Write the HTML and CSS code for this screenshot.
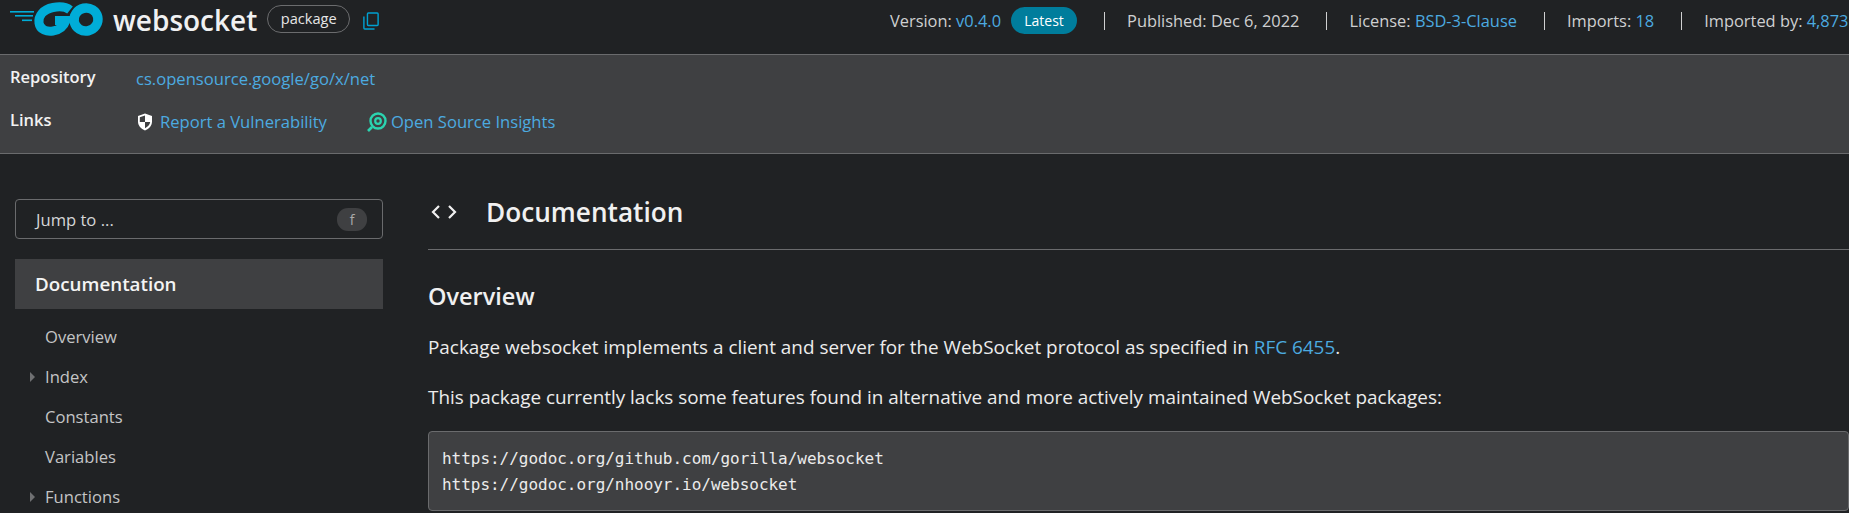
FILE: index.html
```html
<!DOCTYPE html>
<html lang="en">
<head>
<meta charset="utf-8">
<title>websocket package</title>
<link rel="stylesheet" href="styles.css">
</head>
<body>
<header class="head">
  <div class="title">
    <svg class="logo" viewBox="0 0 94 38" width="94" height="38" aria-hidden="true">
      <g fill="#00add8">
        <rect x="0" y="11" width="24" height="1.600"/>
        <rect x="5" y="15" width="18" height="1.600"/>
        <rect x="12" y="19.500" width="10" height="1.600"/>
      </g>
      <g fill="none" stroke="#00add8">
        <path d="M60 10C55 6 48 6.500 43 7.500C33 9.500 28 16 29 23C30 30 37 32 43 31C50 30 54 26 56 20.500H45" stroke-width="9"/>
        <ellipse cx="76" cy="19.500" rx="12" ry="11.500" stroke-width="9.500" transform="rotate(-12 76 19.500)"/>
      </g>
    </svg>
    <h1 class="name">websocket</h1>
    <span class="badge">package</span>
    <svg class="copy" viewBox="0 0 18 20" width="16" height="18" aria-hidden="true">
      <g fill="none" stroke="#00a0d0" stroke-width="1.600">
        <rect x="5" y="1" width="12" height="14" rx="1"/>
        <path d="M1 5v13a1 1 0 0 0 1 1h11"/>
      </g>
    </svg>
  </div>
  <div class="facts">
    <span class="fact">Version: <a href="#">v0.4.0</a><span class="pill">Latest</span></span>
    <span class="fact sep">Published: Dec 6, 2022</span>
    <span class="fact sep">License: <a href="#">BSD-3-Clause</a></span>
    <span class="fact sep">Imports: <a href="#">18</a></span>
    <span class="fact sep">Imported by: <a href="#">4,873</a></span>
  </div>
</header>

<section class="meta">
  <div class="meta-row">
    <strong class="meta-label">Repository</strong>
    <a class="meta-link" href="#">cs.opensource.google/go/x/net</a>
  </div>
  <div class="meta-row">
    <strong class="meta-label">Links</strong>
    <div class="meta-links">
      <a class="meta-link icon-link" href="#">
        <svg class="shield" viewBox="0 0 16 18" width="16" height="18" aria-hidden="true">
          <path d="M8 .5L15 3v5.500c0 4.200-3 7.500-7 9c-4-1.500-7-4.800-7-9V3z" fill="#fff"/>
          <path d="M8 2.500v6.500H2.800V4.300zM8 9h5.200c-.4 2.800-2.600 5-5.200 6.200z" fill="#3f4042"/>
        </svg>Report a Vulnerability</a>
      <a class="meta-link icon-link" href="#">
        <svg class="insights" viewBox="0 0 20 20" width="20" height="20" aria-hidden="true">
          <g fill="none" stroke="#2bd4b0">
            <circle cx="11" cy="9" r="7.500" stroke-width="2.400"/>
            <circle cx="11" cy="9" r="2.800" stroke-width="2.200"/>
            <path d="M5 15l-4 4" stroke-width="2.600"/>
          </g>
        </svg>Open Source Insights</a>
    </div>
  </div>
</section>

<div class="page">
  <nav class="side">
    <div class="jump">
      <span>Jump to ...</span>
      <kbd class="key">f</kbd>
    </div>
    <div class="side-head">Documentation</div>
    <ul class="side-list">
      <li class="side-item">Overview</li>
      <li class="side-item more">Index</li>
      <li class="side-item">Constants</li>
      <li class="side-item">Variables</li>
      <li class="side-item more">Functions</li>
    </ul>
  </nav>
  <main class="doc">
    <div class="doc-head">
      <svg class="code-icon" viewBox="0 0 26 16" width="26" height="16" aria-hidden="true">
        <path d="M8 2L2 8l6 6M18 2l6 6l-6 6" fill="none" stroke="#f0f0f0" stroke-width="2.200"/>
      </svg>
      <h2 class="doc-title">Documentation</h2>
    </div>
    <h3 class="overview">Overview</h3>
    <p class="para">Package websocket implements a client and server for the WebSocket protocol as specified in <a href="#">RFC 6455</a>.</p>
    <p class="para">This package currently lacks some features found in alternative and more actively maintained WebSocket packages:</p>
    <pre class="code">https://godoc.org/github.com/gorilla/websocket
https://godoc.org/nhooyr.io/websocket</pre>
  </main>
</div>
</body>
</html>
```
FILE: styles.css
```css
* { box-sizing: border-box; }
html, body { height: 513px; overflow: hidden; }
body {
  margin: 0;
  background: #202224;
  color: #e6e6e6;
  font-family: "Open Sans", "Noto Sans", sans-serif;
  font-size: 16.600px;
}
a { color: #4cabe0; text-decoration: none; }

.head {
  height: 54px;
  display: flex;
  align-items: flex-start;
  justify-content: space-between;
  white-space: nowrap;
  overflow: hidden;
}
.title { display: flex; align-items: center; height: 40px; padding-left: 10px; }
.logo { flex: none; margin: -2px 9px 0 0; }
.name {
  margin: 0 10px 0 0;
  font-size: 28px;
  font-weight: 600;
  color: #f0f1f2;
  line-height: 40px;
}
.badge {
  height: 28px;
  width: 83px;
  margin-top: -2px;
  border: 1px solid #6b6c6e;
  border-radius: 14px;
  font-size: 14.600px;
  line-height: 25px;
  text-align: center;
  color: #e6e6e6;
}
.copy { margin: 2px 0 0 13px; }

.facts {
  display: flex;
  align-items: center;
  height: 41px;
  width: 959px;
  flex: none;
  font-size: 16.400px;
}
.fact { color: #cfd0d1; display: inline-flex; align-items: center; white-space: pre; }
.sep { margin-left: 27px; }
.sep::before {
  content: "";
  width: 1px;
  height: 18px;
  background: #cfd0d1;
  margin-right: 22px;
}
.pill {
  margin-left: 10px;
  width: 66px;
  height: 27px;
  border-radius: 14px;
  background: #007d9c;
  color: #fff;
  font-size: 14px;
  line-height: 27px;
  text-align: center;
}

.meta {
  height: 100px;
  background: #3f4042;
  border-top: 1px solid #6a6b6d;
  border-bottom: 1px solid #6a6b6d;
  padding: 2px 10px 0;
}
.meta-row { display: flex; height: 43px; align-items: center; }
.meta-label { width: 126px; font-size: 16.500px; font-weight: 600; color: #f2f2f2; margin-top: -4px; }
.meta-links { display: flex; gap: 40px; }
.icon-link { display: inline-flex; align-items: center; }
.shield { margin: 0 7px 0 1px; }
.insights { margin-right: 4px; }

.page {
  display: grid;
  grid-template-columns: 368px 1fr;
  column-gap: 45px;
  padding: 45px 0 0 15px;
}
.jump {
  height: 40px;
  border: 1px solid #6a6b6d;
  border-radius: 4px;
  display: flex;
  align-items: center;
  justify-content: space-between;
  padding: 0 15px 0 20px;
  color: #d5d6d7;
}
.key {
  width: 30px;
  height: 23px;
  border-radius: 11px;
  background: #3f4042;
  color: #aaa;
  font: inherit;
  font-size: 14px;
  line-height: 23px;
  text-align: center;
}
.side-head {
  margin-top: 20px;
  height: 50px;
  line-height: 51px;
  padding-left: 20px;
  background: #3f4042;
  font-size: 18.800px;
  font-weight: 600;
  color: #f4f4f4;
}
.side-list { list-style: none; margin: 8px 0 0; padding: 0; }
.side-item {
  height: 40px;
  line-height: 40px;
  padding-left: 30px;
  color: #c4c5c6;
  position: relative;
}
.more::before {
  content: "";
  position: absolute;
  left: 15px;
  top: 15px;
  border-left: 5px solid #6f7072;
  border-top: 5px solid transparent;
  border-bottom: 5px solid transparent;
}

.doc { min-width: 0; }
.doc-head {
  height: 51px;
  display: flex;
  align-items: center;
  border-bottom: 1px solid #6a6b6d;
  padding-bottom: 25px;
}
.code-icon { margin: 0 29px 0 3px; flex: none; }
.doc-title {
  margin: 0;
  font-size: 26.200px;
  font-weight: 600;
  color: #f0f0f0;
  line-height: 34px;
}
.overview {
  margin: 29px 0 0;
  font-size: 23.500px;
  font-weight: 600;
  line-height: 34px;
  color: #f0f0f0;
}
.para { margin: 17px 0 0; font-size: 18.900px; line-height: 34px; color: #ececec; white-space: nowrap; }
.para + .para { margin-top: 16px; }
.code {
  margin: 17px 0 0;
  height: 80px;
  border: 1px solid #6a6b6d;
  border-radius: 4px;
  background: #3f4042;
  padding: 14px 13px;
  font-family: "DejaVu Sans Mono", "Liberation Mono", monospace;
  font-size: 16px;
  letter-spacing: -0.03px;
  line-height: 26px;
  color: #ececec;
  overflow: hidden;
}
```
